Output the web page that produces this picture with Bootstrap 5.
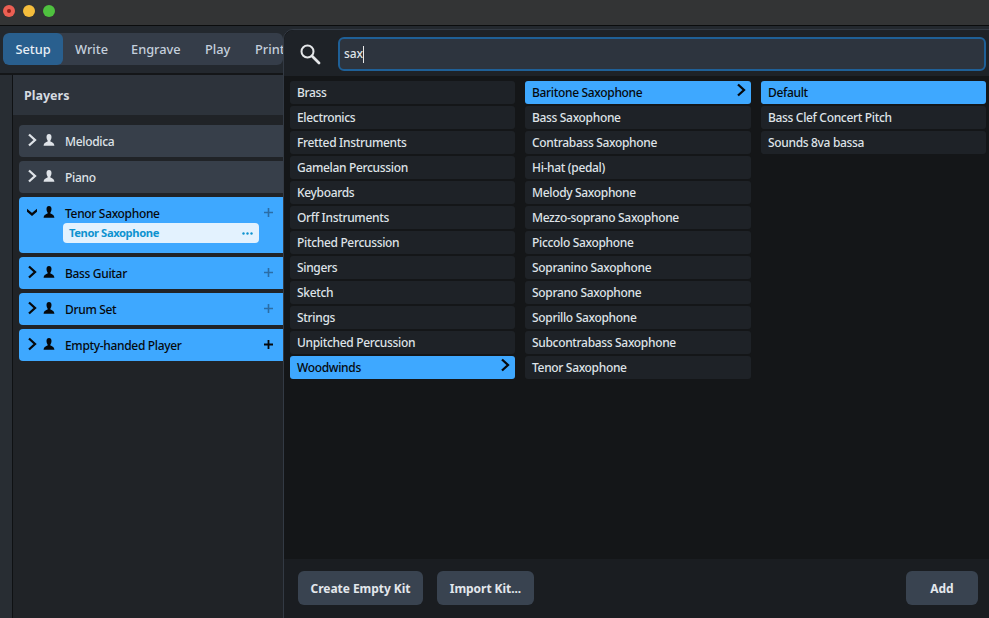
<!DOCTYPE html>
<html lang="en">
<head>
<meta charset="utf-8">
<title>Add Player</title>
<link href="https://cdn.jsdelivr.net/npm/bootstrap@5.3.0/dist/css/bootstrap.min.css" rel="stylesheet">
<style>
html,body{height:100%;}
body{width:989px;height:618px;overflow:hidden;background:#202327;font-family:"Noto Sans",sans-serif;font-size:12px;font-weight:500;line-height:16px;color:#dfe3e8;letter-spacing:-.33px;}
.shell{position:relative;width:989px;height:618px;}
.titlebar{height:25px;background:#333435;padding:5px 0 0 3px;gap:8px;}
.tl{width:12px;height:12px;border-radius:50%;}
.tl-r{background:#ec5f53;position:relative;}
.tl-r::after{content:"";position:absolute;left:4px;top:4px;width:4px;height:4px;border-radius:50%;background:#8e1f18;}
.tl-y{background:#f5bd3c;}
.tl-g{background:#4fc13f;}
.toolbar{height:48px;background:#23282e;border-top:1px solid #0b0c0d;padding:7px 0 0 3px;}
.tabs{height:32px;width:280px;background:#353d49;border-radius:6px;overflow:hidden;font-size:12.8px;color:#c4cfdc;letter-spacing:0;}
.tabitem{height:32px;display:flex;align-items:center;white-space:nowrap;flex:none;}
.tabitem.on{width:60px;justify-content:center;background:#295f8e;border-radius:6px;color:#e8eef5;}
.tabitem.t1{margin-left:12px;width:56px;}
.tabitem.t2{width:74px;}
.tabitem.t3{width:50px;}
.mainarea{height:545px;border-top:2px solid #141618;}
.strip{width:13px;background:#282d33;border-right:1px solid #0f1113;}
.panel{flex:1;min-width:0;}
.panelhead{height:40px;background:#2d333b;padding:1px 0 0 11px;font-weight:700;font-size:12.5px;color:#d5dae0;letter-spacing:0;}
.plist{padding:10px 0 0 6px;gap:4px;}
.prow{width:270px;height:32px;border-radius:4px 0 0 4px;background:#373f4a;color:#dfe3e8;position:relative;}
.prow.sel{background:#3ea8ff;color:#06090c;}
.prow.tall{height:56px;}
.rowtop{height:32px;}
.chev{width:10px;height:14px;margin-left:8px;margin-top:-3px;flex:none;}
.pers{width:12px;height:12px;margin-left:6px;margin-top:-2px;flex:none;}
.pname{margin-left:10px;padding-top:1px;}
.prow .plus{position:absolute;left:244px;top:10px;width:11px;height:11px;}
.instr{position:absolute;left:44px;top:26px;width:196px;height:20px;background:#e3f2fe;border-radius:4px;color:#0e93d0;font-weight:700;font-size:11.2px;letter-spacing:-.4px;padding:0 6px;}
.instr .dots{margin-left:auto;width:11px;height:3px;}
.dlg{position:absolute;left:283px;top:29px;width:720px;height:600px;background:#141618;border:1px solid #333a44;border-radius:10px 0 0 10px;}
.dlghead{height:46px;background:#1e2227;padding:2px 0 0 15px;border-radius:10px 0 0 0;}
.searchic{width:22px;height:22px;flex:none;}
.searchbox{margin-left:17px;width:648px;height:34px;background:#2d343e;border:2px solid #1f6097;border-radius:6px;padding:0 4px;color:#dfe3e8;font-size:12px;letter-spacing:-.1px;display:flex;align-items:center;}
.caret-bar{display:inline-block;width:1px;height:17px;background:#e8e8e8;}
.cols{padding:5px 0 0 6px;gap:10px;height:483px;}
.pickcol{width:225px;gap:2px;}
.pickcol.c2{width:226px;}
.pick{height:23px;background:#1e2227;border-radius:3px;padding:0 7px;position:relative;color:#dfe3e8;}
.pick.on{background:#3ea8ff;color:#06090c;}
.pick svg{position:absolute;right:5px;top:2px;width:10px;height:14px;}
.dlgfoot{height:70px;background:#1a1d21;padding:12px 0 0 14px;}
.fbtn{height:34px;background:#394350;border:0;border-radius:6px;color:#e3e7ec;font-size:12px;font-weight:700;padding:1px 0 0;display:flex;align-items:center;justify-content:center;letter-spacing:-.05px;}
.fb1{width:125px;}
.fb2{width:97px;margin-left:14px;}
.fb3{width:72px;margin-left:372px;}
</style>
</head>
<body>
<div class="shell">
  <div class="titlebar d-flex align-items-start">
    <div class="tl tl-r"></div><div class="tl tl-y"></div><div class="tl tl-g"></div>
  </div>
  <div class="toolbar">
    <div class="tabs d-flex">
      <div class="tabitem on">Setup</div>
      <div class="tabitem t1">Write</div>
      <div class="tabitem t2">Engrave</div>
      <div class="tabitem t3">Play</div>
      <div class="tabitem">Print</div>
    </div>
  </div>
  <div class="mainarea d-flex">
    <div class="strip"></div>
    <div class="panel">
      <div class="panelhead d-flex align-items-center">Players</div>
      <div class="plist d-flex flex-column">
        <div class="prow"><div class="rowtop d-flex align-items-center">
          <svg class="chev" viewBox="0 0 10 14"><path d="M2 1.500 8 7 2 12.500" fill="none" stroke="#dfe3e8" stroke-width="2.300"/></svg>
          <svg class="pers" viewBox="0 0 12 12"><path d="M6 0C4.400 0 3.500 1.300 3.500 3S4.300 6 4.600 6.400V7.500C3 8.200 .8 8.800 .6 11.800H11.400C11.200 8.800 9 8.200 7.400 7.500V6.400C7.700 6 8.500 4.700 8.500 3S7.600 0 6 0Z" fill="#dfe3e8"/></svg>
          <span class="pname">Melodica</span></div></div>
        <div class="prow"><div class="rowtop d-flex align-items-center">
          <svg class="chev" viewBox="0 0 10 14"><path d="M2 1.500 8 7 2 12.500" fill="none" stroke="#dfe3e8" stroke-width="2.300"/></svg>
          <svg class="pers" viewBox="0 0 12 12"><path d="M6 0C4.400 0 3.500 1.300 3.500 3S4.300 6 4.600 6.400V7.500C3 8.200 .8 8.800 .6 11.800H11.400C11.200 8.800 9 8.200 7.400 7.500V6.400C7.700 6 8.500 4.700 8.500 3S7.600 0 6 0Z" fill="#dfe3e8"/></svg>
          <span class="pname">Piano</span></div></div>
        <div class="prow sel tall"><div class="rowtop d-flex align-items-center">
          <svg class="chev" viewBox="0 0 10 14"><path d="M-1.500 4 5 9.500 11.500 4" fill="none" stroke="#06090c" stroke-width="2.300"/></svg>
          <svg class="pers" viewBox="0 0 12 12"><path d="M6 0C4.400 0 3.500 1.300 3.500 3S4.300 6 4.600 6.400V7.500C3 8.200 .8 8.800 .6 11.800H11.400C11.200 8.800 9 8.200 7.400 7.500V6.400C7.700 6 8.500 4.700 8.500 3S7.600 0 6 0Z" fill="#06090c"/></svg>
          <span class="pname">Tenor Saxophone</span></div>
          <svg class="plus" viewBox="0 0 11 11"><path d="M5.500 1V10M1 5.500H10" stroke="#2b6da6" stroke-width="1.600"/></svg>
          <div class="instr d-flex align-items-center"><span>Tenor Saxophone</span>
            <svg class="dots" viewBox="0 0 11 3"><circle cx="1.500" cy="1.500" r="1.200" fill="#0e93d0"/><circle cx="5.500" cy="1.500" r="1.200" fill="#0e93d0"/><circle cx="9.500" cy="1.500" r="1.200" fill="#0e93d0"/></svg></div>
        </div>
        <div class="prow sel"><div class="rowtop d-flex align-items-center">
          <svg class="chev" viewBox="0 0 10 14"><path d="M2 1.500 8 7 2 12.500" fill="none" stroke="#06090c" stroke-width="2.300"/></svg>
          <svg class="pers" viewBox="0 0 12 12"><path d="M6 0C4.400 0 3.500 1.300 3.500 3S4.300 6 4.600 6.400V7.500C3 8.200 .8 8.800 .6 11.800H11.400C11.200 8.800 9 8.200 7.400 7.500V6.400C7.700 6 8.500 4.700 8.500 3S7.600 0 6 0Z" fill="#06090c"/></svg>
          <span class="pname">Bass Guitar</span></div>
          <svg class="plus" viewBox="0 0 11 11"><path d="M5.500 1V10M1 5.500H10" stroke="#2b6da6" stroke-width="1.600"/></svg></div>
        <div class="prow sel"><div class="rowtop d-flex align-items-center">
          <svg class="chev" viewBox="0 0 10 14"><path d="M2 1.500 8 7 2 12.500" fill="none" stroke="#06090c" stroke-width="2.300"/></svg>
          <svg class="pers" viewBox="0 0 12 12"><path d="M6 0C4.400 0 3.500 1.300 3.500 3S4.300 6 4.600 6.400V7.500C3 8.200 .8 8.800 .6 11.800H11.400C11.200 8.800 9 8.200 7.400 7.500V6.400C7.700 6 8.500 4.700 8.500 3S7.600 0 6 0Z" fill="#06090c"/></svg>
          <span class="pname">Drum Set</span></div>
          <svg class="plus" viewBox="0 0 11 11"><path d="M5.500 1V10M1 5.500H10" stroke="#2b6da6" stroke-width="1.600"/></svg></div>
        <div class="prow sel"><div class="rowtop d-flex align-items-center">
          <svg class="chev" viewBox="0 0 10 14"><path d="M2 1.500 8 7 2 12.500" fill="none" stroke="#06090c" stroke-width="2.300"/></svg>
          <svg class="pers" viewBox="0 0 12 12"><path d="M6 0C4.400 0 3.500 1.300 3.500 3S4.300 6 4.600 6.400V7.500C3 8.200 .8 8.800 .6 11.800H11.400C11.200 8.800 9 8.200 7.400 7.500V6.400C7.700 6 8.500 4.700 8.500 3S7.600 0 6 0Z" fill="#06090c"/></svg>
          <span class="pname">Empty-handed Player</span></div>
          <svg class="plus" viewBox="0 0 11 11"><path d="M5.500 1V10M1 5.500H10" stroke="#06090c" stroke-width="1.800"/></svg></div>
      </div>
    </div>
  </div>

  <div class="dlg">
    <div class="dlghead d-flex align-items-center">
      <svg class="searchic" viewBox="0 0 22 22"><circle cx="8.500" cy="8.500" r="6" fill="none" stroke="#e4e6e8" stroke-width="2"/><path d="M13 13 20 20" stroke="#e4e6e8" stroke-width="2.800" stroke-linecap="round"/></svg>
      <div class="searchbox">sax<span class="caret-bar"></span></div>
    </div>
    <div class="cols d-flex align-items-start">
      <div class="pickcol d-flex flex-column">
        <div class="pick d-flex align-items-center">Brass</div>
        <div class="pick d-flex align-items-center">Electronics</div>
        <div class="pick d-flex align-items-center">Fretted Instruments</div>
        <div class="pick d-flex align-items-center">Gamelan Percussion</div>
        <div class="pick d-flex align-items-center">Keyboards</div>
        <div class="pick d-flex align-items-center">Orff Instruments</div>
        <div class="pick d-flex align-items-center">Pitched Percussion</div>
        <div class="pick d-flex align-items-center">Singers</div>
        <div class="pick d-flex align-items-center">Sketch</div>
        <div class="pick d-flex align-items-center">Strings</div>
        <div class="pick d-flex align-items-center">Unpitched Percussion</div>
        <div class="pick on d-flex align-items-center">Woodwinds<svg viewBox="0 0 10 14"><path d="M2 1.500 8 7 2 12.500" fill="none" stroke="#06090c" stroke-width="2.300"/></svg></div>
      </div>
      <div class="pickcol c2 d-flex flex-column">
        <div class="pick on d-flex align-items-center">Baritone Saxophone<svg viewBox="0 0 10 14"><path d="M2 1.500 8 7 2 12.500" fill="none" stroke="#06090c" stroke-width="2.300"/></svg></div>
        <div class="pick d-flex align-items-center">Bass Saxophone</div>
        <div class="pick d-flex align-items-center">Contrabass Saxophone</div>
        <div class="pick d-flex align-items-center">Hi-hat (pedal)</div>
        <div class="pick d-flex align-items-center">Melody Saxophone</div>
        <div class="pick d-flex align-items-center">Mezzo-soprano Saxophone</div>
        <div class="pick d-flex align-items-center">Piccolo Saxophone</div>
        <div class="pick d-flex align-items-center">Sopranino Saxophone</div>
        <div class="pick d-flex align-items-center">Soprano Saxophone</div>
        <div class="pick d-flex align-items-center">Soprillo Saxophone</div>
        <div class="pick d-flex align-items-center">Subcontrabass Saxophone</div>
        <div class="pick d-flex align-items-center">Tenor Saxophone</div>
      </div>
      <div class="pickcol d-flex flex-column">
        <div class="pick on d-flex align-items-center">Default</div>
        <div class="pick d-flex align-items-center">Bass Clef Concert Pitch</div>
        <div class="pick d-flex align-items-center">Sounds 8va bassa</div>
      </div>
    </div>
    <div class="dlgfoot d-flex align-items-start">
      <button class="fbtn fb1">Create Empty Kit</button>
      <button class="fbtn fb2">Import Kit...</button>
      <button class="fbtn fb3">Add</button>
    </div>
  </div>
</div>
<script src="https://cdn.jsdelivr.net/npm/bootstrap@5.3.0/dist/js/bootstrap.bundle.min.js"></script>
</body>
</html>
